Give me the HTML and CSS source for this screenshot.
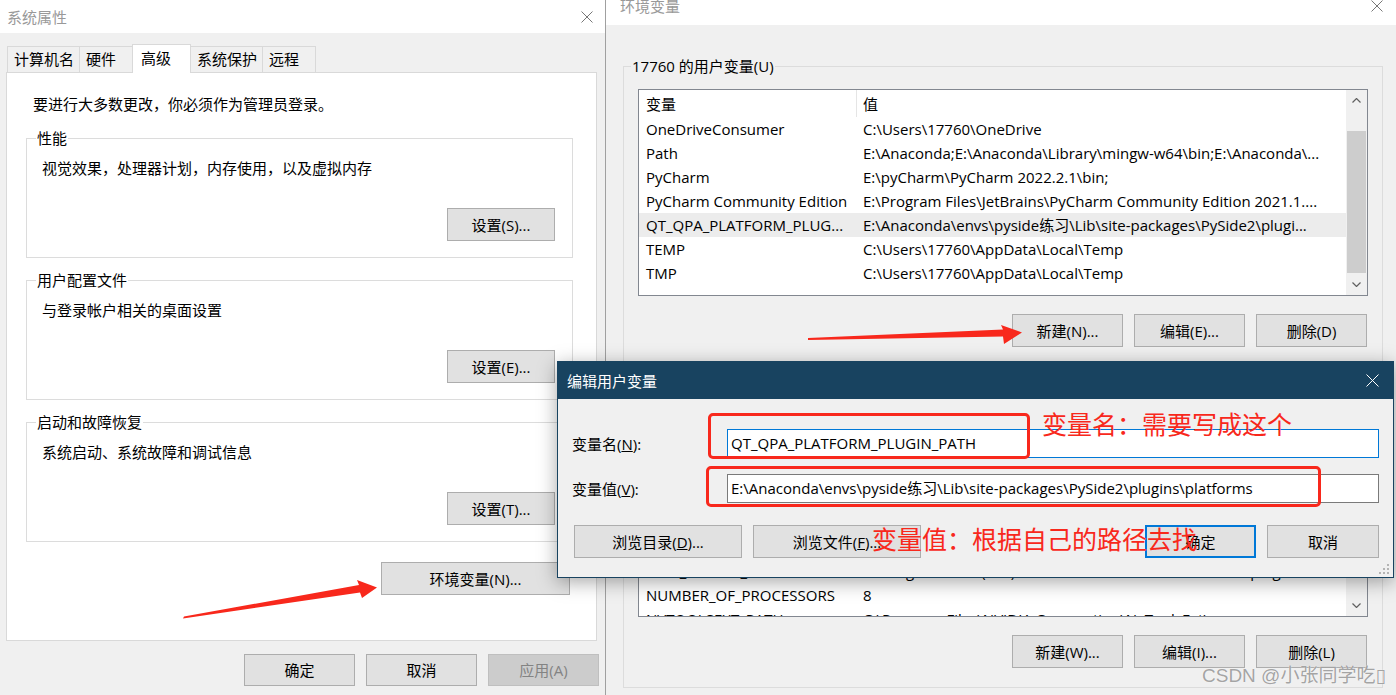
FILE: index.html
```html
<!DOCTYPE html>
<html lang="zh-CN">
<head>
    <meta charset="UTF-8">
    <meta name="viewport" content="width=device-width, initial-scale=1.0">
    <title>环境变量</title>
    <link rel="stylesheet" href="styles.css">
</head>
<body>

<div class="desktop">

    <!-- 系统属性 -->
    <div class="window sys-window">
        <div class="titlebar">
            <span class="title">系统属性</span>
            <svg class="close-icon" width="12" height="12" viewBox="0 0 12 12"><path d="M0.5 0.5L11.5 11.5M11.5 0.5L0.5 11.5"/></svg>
        </div>
        <div class="sys-body">
            <div class="tabs">
                <div class="tab">计算机名</div>
                <div class="tab">硬件</div>
                <div class="tab active">高级</div>
                <div class="tab">系统保护</div>
                <div class="tab">远程</div>
            </div>
            <div class="tab-panel">
                <p class="notice">要进行大多数更改，你必须作为管理员登录。</p>

                <fieldset class="group">
                    <legend>性能</legend>
                    <p>视觉效果，处理器计划，内存使用，以及虚拟内存</p>
                    <div class="group-actions"><button class="btn btn-settings">设置(S)...</button></div>
                </fieldset>

                <fieldset class="group">
                    <legend>用户配置文件</legend>
                    <p>与登录帐户相关的桌面设置</p>
                    <div class="group-actions"><button class="btn btn-settings">设置(E)...</button></div>
                </fieldset>

                <fieldset class="group">
                    <legend>启动和故障恢复</legend>
                    <p>系统启动、系统故障和调试信息</p>
                    <div class="group-actions"><button class="btn btn-settings">设置(T)...</button></div>
                </fieldset>

                <div class="env-action"><button class="btn btn-env">环境变量(N)...</button></div>
            </div>
            <div class="dialog-actions">
                <button class="btn btn-wide">确定</button>
                <button class="btn btn-wide">取消</button>
                <button class="btn btn-wide" disabled>应用(A)</button>
            </div>
        </div>
    </div>

    <!-- 环境变量 -->
    <div class="window env-window">
        <div class="titlebar env-titlebar">
            <span class="title">环境变量</span>
            <svg class="close-icon" width="12" height="12" viewBox="0 0 12 12"><path d="M0.5 0.5L11.5 11.5M11.5 0.5L0.5 11.5"/></svg>
        </div>
        <div class="env-body">
            <fieldset class="var-group">
                <legend>17760 的用户变量(U)</legend>
                <div class="listview">
                    <div class="list-main">
                        <div class="list-row list-head"><span class="col-name">变量</span><span class="col-value">值</span></div>
                        <div class="list-row"><span class="col-name">OneDriveConsumer</span><span class="col-value">C:\Users\17760\OneDrive</span></div>
                        <div class="list-row"><span class="col-name">Path</span><span class="col-value">E:\Anaconda;E:\Anaconda\Library\mingw-w64\bin;E:\Anaconda\...</span></div>
                        <div class="list-row"><span class="col-name">PyCharm</span><span class="col-value">E:\pyCharm\PyCharm 2022.2.1\bin;</span></div>
                        <div class="list-row"><span class="col-name">PyCharm Community Edition</span><span class="col-value">E:\Program Files\JetBrains\PyCharm Community Edition 2021.1....</span></div>
                        <div class="list-row selected"><span class="col-name">QT_QPA_PLATFORM_PLUG...</span><span class="col-value">E:\Anaconda\envs\pyside练习\Lib\site-packages\PySide2\plugi...</span></div>
                        <div class="list-row"><span class="col-name">TEMP</span><span class="col-value">C:\Users\17760\AppData\Local\Temp</span></div>
                        <div class="list-row"><span class="col-name">TMP</span><span class="col-value">C:\Users\17760\AppData\Local\Temp</span></div>
                    </div>
                    <div class="scrollbar">
                        <div class="sb-btn"><svg width="9" height="5" viewBox="0 0 9 5"><path d="M0.5 4.5L4.5 0.5L8.5 4.5"/></svg></div>
                        <div class="sb-track"><div class="sb-thumb user-thumb"></div></div>
                        <div class="sb-btn"><svg width="9" height="5" viewBox="0 0 9 5"><path d="M0.5 0.5L4.5 4.5L8.5 0.5"/></svg></div>
                    </div>
                </div>
                <div class="list-actions">
                    <button class="btn btn-list">新建(N)...</button>
                    <button class="btn btn-list">编辑(E)...</button>
                    <button class="btn btn-list">删除(D)</button>
                </div>
            </fieldset>

            <fieldset class="var-group sys-group">
                <legend>系统变量(S)</legend>
                <div class="listview">
                    <div class="list-main">
                        <div class="list-row list-head"><span class="col-name">变量</span><span class="col-value">值</span></div>
                        <div class="list-row"><span class="col-name">ComSpec</span><span class="col-value">C:\Windows\system32\cmd.exe</span></div>
                        <div class="list-row"><span class="col-name">CUDA_PATH</span><span class="col-value">C:\Program Files\NVIDIA GPU Computing Toolkit\CUDA\v11.6</span></div>
                        <div class="list-row"><span class="col-name">DriverData</span><span class="col-value">C:\Windows\System32\Drivers\DriverData</span></div>
                        <div class="list-row"><span class="col-name">JAVA_HOME</span><span class="col-value">C:\Program Files\Java\jdk1.8.0_301</span></div>
                        <div class="list-row"><span class="col-name">JAVA_TOOL_OPTIONS</span><span class="col-value">-Dfile.encoding=UTF-8</span></div>
                        <div class="list-row"><span class="col-name">MOZ_PLUGIN_PATH</span><span class="col-value">C:\Program Files (x86)\Foxit Software\Foxit PDF Reader\plugins\</span></div>
                        <div class="list-row"><span class="col-name">NUMBER_OF_PROCESSORS</span><span class="col-value">8</span></div>
                        <div class="list-row"><span class="col-name">NVTOOLSEXT_PATH</span><span class="col-value">C:\Program Files\NVIDIA Corporation\NvToolsExt\</span></div>
                    </div>
                    <div class="scrollbar">
                        <div class="sb-btn"><svg width="9" height="5" viewBox="0 0 9 5"><path d="M0.5 4.5L4.5 0.5L8.5 4.5"/></svg></div>
                        <div class="sb-track"><div class="sb-thumb sys-thumb"></div></div>
                        <div class="sb-btn"><svg width="9" height="5" viewBox="0 0 9 5"><path d="M0.5 0.5L4.5 4.5L8.5 0.5"/></svg></div>
                    </div>
                </div>
                <div class="list-actions">
                    <button class="btn btn-list">新建(W)...</button>
                    <button class="btn btn-list">编辑(I)...</button>
                    <button class="btn btn-list">删除(L)</button>
                </div>
            </fieldset>
        </div>
    </div>

    <!-- 编辑用户变量 -->
    <div class="window edit-dialog">
        <div class="edit-titlebar">
            <span>编辑用户变量</span>
            <svg class="close-icon" width="13" height="13" viewBox="0 0 13 13"><path d="M0.5 0.5L12.5 12.5M12.5 0.5L0.5 12.5"/></svg>
        </div>
        <div class="edit-body">
            <div class="field-row">
                <label>变量名(<u>N</u>):</label>
                <div class="textbox focused">QT_QPA_PLATFORM_PLUGIN_PATH</div>
            </div>
            <div class="field-row">
                <label>变量值(<u>V</u>):</label>
                <div class="textbox">E:\Anaconda\envs\pyside练习\Lib\site-packages\PySide2\plugins\platforms</div>
            </div>
            <div class="edit-actions">
                <button class="btn btn-browse">浏览目录(<u>D</u>)...</button>
                <button class="btn btn-browse">浏览文件(<u>F</u>)...</button>
                <span class="spacer"></span>
                <button class="btn btn-ok">确定</button>
                <button class="btn btn-cancel">取消</button>
            </div>
        </div>
        <svg class="grip" width="12" height="12" viewBox="0 0 12 12">
            <rect x="9" y="1" width="2" height="2"/>
            <rect x="5" y="5" width="2" height="2"/><rect x="9" y="5" width="2" height="2"/>
            <rect x="1" y="9" width="2" height="2"/><rect x="5" y="9" width="2" height="2"/><rect x="9" y="9" width="2" height="2"/>
        </svg>
    </div>

    <!-- annotations drawn over the screenshot -->
    <div class="mark mark-name"></div>
    <div class="mark mark-value"></div>
    <div class="note note-name">变量名：需要写成这个</div>
    <div class="note note-value">变量值：根据自己的路径去找</div>

    <svg class="arrows" width="1396" height="695" viewBox="0 0 1396 695">
        <polygon points="184,616.5 359,585 357,580 377,587.5 362,598 360,592.5 183,618.5"/>
        <polygon points="808,338 1003,329.5 1001,325 1022,332.5 1004,344 1003,336.5 808,340"/>
    </svg>

    <div class="watermark">CSDN @小张同学吃▯</div>
</div>

</body>
</html>
```

FILE: styles.css
```css
/* Page */
body {
    margin: 0;
    font-family: "Open Sans", "Noto Sans CJK SC", sans-serif;
    font-size: 15px;
    line-height: 20px;
    color: #000;
    background: #f0f0f0;
}

p {
    margin: 0;
}

.desktop {
    position: relative;
    width: 1396px;
    height: 695px;
    overflow: hidden;
}

/* Windows */
.window {
    position: absolute;
    box-sizing: border-box;
    background: #f0f0f0;
}

.titlebar {
    display: flex;
    justify-content: space-between;
    align-items: center;
    background: #fff;
}

.titlebar .title {
    color: #999;
}

.close-icon path {
    stroke: #777;
    stroke-width: 1;
    fill: none;
}

/* Shared buttons */
.btn {
    box-sizing: border-box;
    height: 33px;
    padding: 0;
    font: inherit;
    color: #000;
    background: #e1e1e1;
    border: 1px solid #adadad;
    border-radius: 0;
}

.btn:disabled {
    background: #cccccc;
    border-color: #bfbfbf;
    color: #838383;
}

/* ---------- 系统属性 ---------- */
.sys-window {
    left: 0;
    top: 0;
    width: 605px;
    height: 695px;
    display: flex;
    flex-direction: column;
}

.sys-window .titlebar {
    height: 33px;
    padding: 0 12px 0 7px;
}

.sys-body {
    flex: 1;
    padding: 11px 8px 0 6px;
}

.tabs {
    display: flex;
    align-items: flex-end;
    height: 28px;
    padding-left: 1px;
}

.tab {
    box-sizing: border-box;
    height: 26px;
    min-width: 54px;
    padding: 0 5px 0 6px;
    line-height: 25px;
    border: 1px solid #d9d9d9;
    border-bottom: none;
    margin-right: -1px;
}

.tab.active {
    position: relative;
    z-index: 1;
    height: 29px;
    min-width: 59px;
    padding: 0 8px;
    line-height: 26px;
    margin-bottom: -1px;
    background: #fff;
}

.tab-panel {
    box-sizing: border-box;
    height: 569px;
    background: #fff;
    border: 1px solid #d9d9d9;
    padding: 0 23px 0 19px;
}

.notice {
    margin: 21px 0 0 7px;
}

.group {
    margin: 14px 0 0;
    padding: 0 17px 16px 9px;
    border: 1px solid #dcdcdc;
    min-width: 0;
}

.group + .group {
    margin-top: 12px;
}

.group legend {
    padding: 0 1px;
    line-height: 20px;
}

.group p {
    margin: 10px 0 0 6px;
}

.group-actions {
    display: flex;
    justify-content: flex-end;
    margin-top: 30px;
}

.btn-settings {
    width: 108px;
}

.env-action {
    display: flex;
    justify-content: flex-end;
    margin: 20px 3px 0 0;
}

.btn-env {
    width: 189px;
}

.dialog-actions {
    display: flex;
    justify-content: flex-end;
    gap: 11px;
    margin: 13px -2px 0 0;
}

.btn-wide {
    width: 111px;
    height: 32px;
}

/* ---------- 环境变量 ---------- */
.env-window {
    left: 605px;
    top: 0;
    width: 791px;
    height: 695px;
    border-left: 1px solid #a0a0a0;
}

.env-titlebar {
    height: 25px;
    align-items: flex-start;
    padding: 0 13px 0 14px;
}

.env-titlebar .title {
    line-height: 13px;
}

.env-body {
    padding: 31px 0 0 17px;
}

.var-group {
    width: 760px;
    box-sizing: border-box;
    margin: 0;
    padding: 0 14px 14px 7px;
    border: 1px solid #dcdcdc;
    min-width: 0;
}

.var-group legend {
    padding: 0 1px;
    line-height: 20px;
}

.sys-group {
    margin-top: 11px;
    padding-bottom: 19px;
}

.listview {
    display: flex;
    box-sizing: border-box;
    height: 207px;
    margin: 13px 0 0 7px;
    background: #fff;
    border: 1px solid #828790;
}

.sys-group .listview {
    height: 206px;
    margin-top: 18px;
}

.list-main {
    flex: 1;
    overflow: hidden;
}

.list-row {
    display: flex;
    align-items: center;
    height: 24px;
    white-space: nowrap;
}

.list-head {
    height: 27px;
    align-items: stretch;
}

.list-head span {
    display: flex;
    align-items: center;
}

.col-name {
    flex: none;
    width: 218px;
    padding-left: 7px;
    box-sizing: border-box;
    overflow: hidden;
}

.list-head .col-name {
    border-right: 1px solid #e5e5e5;
}

.col-value {
    flex: 1;
    padding-left: 6px;
    overflow: hidden;
}

.list-row.selected {
    background: #ececec;
}

.scrollbar {
    display: flex;
    flex-direction: column;
    width: 21px;
    background: #f0f0f0;
}

.sb-btn {
    display: flex;
    align-items: center;
    justify-content: center;
    height: 21px;
}

.sb-btn path {
    fill: none;
    stroke: #606060;
    stroke-width: 1.2;
}

.sb-track {
    flex: 1;
    display: flex;
    flex-direction: column;
}

.sb-thumb {
    background: #cdcdcd;
}

.user-thumb {
    flex: 1;
    margin: 20px 1px 1px;
}

.sys-thumb {
    height: 60px;
    margin: 40px 1px 0;
}

.list-actions {
    display: flex;
    justify-content: flex-end;
    gap: 11px;
    margin: 18px 1px 0 0;
}

.btn-list {
    width: 111px;
}

/* ---------- 编辑用户变量 ---------- */
.edit-dialog {
    left: 557px;
    top: 361px;
    width: 837px;
    height: 217px;
    border: 1px solid #184360;
    box-shadow: 0 4px 18px rgba(0, 0, 0, 0.35);
    z-index: 2;
}

.edit-titlebar {
    display: flex;
    justify-content: space-between;
    align-items: center;
    height: 37px;
    padding: 0 14px 0 9px;
    background: #184360;
    color: #fff;
}

.edit-titlebar .close-icon path {
    stroke: #fff;
}

.edit-body {
    padding: 30px 14px 0 14px;
}

.field-row {
    display: flex;
    align-items: center;
}

.field-row + .field-row {
    margin-top: 16px;
}

.field-row label {
    width: 155px;
    flex: none;
}

.textbox {
    flex: 1;
    box-sizing: border-box;
    height: 29px;
    line-height: 27px;
    padding: 0 3px;
    background: #fff;
    border: 1px solid #7a7a7a;
    white-space: nowrap;
    overflow: hidden;
}

.textbox.focused {
    border-color: #0078d7;
}

.edit-actions {
    display: flex;
    gap: 11px;
    margin-top: 22px;
    padding-left: 2px;
}

.spacer {
    flex: 1;
}

.btn-browse {
    width: 168px;
}

.btn-ok {
    width: 111px;
    border: 2px solid #0078d7;
}

.btn-cancel {
    width: 112px;
}

.grip {
    position: absolute;
    right: 3px;
    bottom: 2px;
}

.grip rect {
    fill: #b4b4b4;
}

/* ---------- annotations ---------- */
.mark {
    position: absolute;
    box-sizing: border-box;
    border: 3px solid #f8281c;
    border-radius: 5px;
    z-index: 3;
}

.mark-name {
    left: 708px;
    top: 413px;
    width: 322px;
    height: 46px;
}

.mark-value {
    left: 706px;
    top: 466px;
    width: 615px;
    height: 41px;
}

.note {
    position: absolute;
    z-index: 3;
    color: #f8281c;
    font-family: "Noto Sans CJK SC", sans-serif;
    font-size: 25px;
    line-height: 30px;
    white-space: nowrap;
}

.note-name {
    left: 1042px;
    top: 408px;
}

.note-value {
    left: 872px;
    top: 523px;
}

.arrows {
    position: absolute;
    left: 0;
    top: 0;
    z-index: 3;
    pointer-events: none;
}

.arrows polygon {
    fill: #f8281c;
}

.watermark {
    position: absolute;
    left: 1202px;
    top: 664px;
    z-index: 3;
    font-family: "Liberation Sans", "Noto Sans CJK SC", "DejaVu Sans", sans-serif;
    font-size: 19px;
    line-height: 24px;
    color: rgba(140, 140, 140, 0.8);
    text-shadow: 0 0 1px #fff;
}
```
